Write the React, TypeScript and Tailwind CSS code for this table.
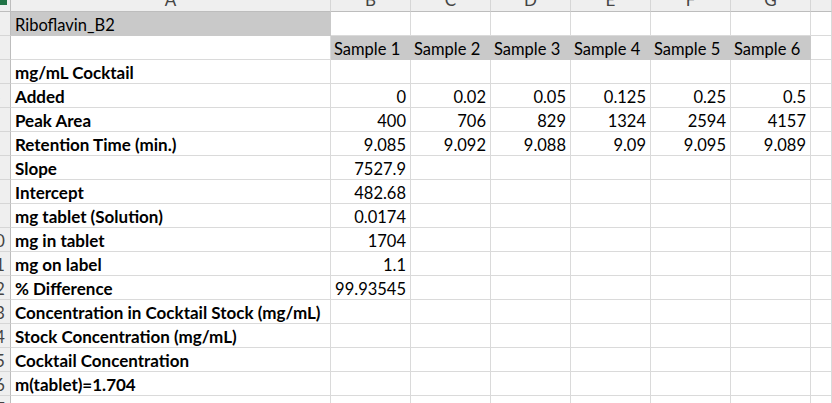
const colLetters = ['A', 'B', 'C', 'D', 'E', 'F', 'G', ''];

type Row = { label?: string; bold?: boolean; values?: string[]; labelFill?: boolean; headerFill?: boolean };

const rows: Row[] = [
  { label: 'Riboflavin_B2', labelFill: true },
  { headerFill: true, values: ['Sample 1', 'Sample 2', 'Sample 3', 'Sample 4', 'Sample 5', 'Sample 6'] },
  { label: 'mg/mL Cocktail', bold: true },
  { label: 'Added', bold: true, values: ['0', '0.02', '0.05', '0.125', '0.25', '0.5'] },
  { label: 'Peak Area', bold: true, values: ['400', '706', '829', '1324', '2594', '4157'] },
  { label: 'Retention Time (min.)', bold: true, values: ['9.085', '9.092', '9.088', '9.09', '9.095', '9.089'] },
  { label: 'Slope', bold: true, values: ['7527.9'] },
  { label: 'Intercept', bold: true, values: ['482.68'] },
  { label: 'mg tablet (Solution)', bold: true, values: ['0.0174'] },
  { label: 'mg in tablet', bold: true, values: ['1704'] },
  { label: 'mg on label', bold: true, values: ['1.1'] },
  { label: '% Difference', bold: true, values: ['99.93545'] },
  { label: 'Concentration in Cocktail Stock (mg/mL)', bold: true },
  { label: 'Stock Concentration (mg/mL)', bold: true },
  { label: 'Cocktail Concentration', bold: true },
  { label: 'm(tablet)=1.704', bold: true },
  {},
];

const cellBase = 'h-[24px] border-r border-b flex items-end overflow-hidden whitespace-nowrap leading-[20px]';

export default function App() {
  return (
    <div className="w-[832px] h-[403px] overflow-hidden bg-white text-black text-[16.5px] [font-family:Lato,'Open_Sans',sans-serif]">
      <div className="grid grid-cols-[11px_320px_repeat(6,80px)_1fr]">
        {/* column header row */}
        <div className="h-[12px] bg-[#efefef] border-r border-b border-r-[#bdbdbd] border-b-[#bdbdbd] overflow-hidden">
          <div className="w-[7px] h-[5px] bg-[#217346]" />
        </div>
        {colLetters.map((l, i) => (
          <div
            key={i}
            className="h-[12px] bg-[#efefef] border-r border-b border-r-[#d6d6d6] border-b-[#bdbdbd] overflow-hidden flex items-end justify-center"
          >
            <span className="leading-none pb-[3px] text-[17px] text-[#444]">{l}</span>
          </div>
        ))}

        {rows.map((r, i) => {
          const n = i + 1;
          return [
            <div key={`h${n}`} className="h-[24px] bg-[#efefef] border-r border-b border-r-[#bdbdbd] border-b-[#d6d6d6] overflow-hidden flex items-end">
              <div className="shrink-0 w-[30px] -ml-[20px] text-center leading-[20px] text-[17px] text-[#444]">{n}</div>
            </div>,
            <div
              key={`a${n}`}
              className={`${cellBase} pl-[4px] ${r.labelFill ? 'bg-[#c9c9c9] border-[#c9c9c9]' : 'border-[#dadada]'} ${r.bold ? 'font-bold text-[17px]' : ''}`}
            >
              {r.label}
            </div>,
            ...[0, 1, 2, 3, 4, 5].map((c) => (
              <div
                key={`v${n}-${c}`}
                className={`${cellBase} ${
                  r.headerFill ? 'bg-[#c9c9c9] border-[#c9c9c9] pl-[3px]' : 'border-[#dadada] justify-end pr-[4px]'
                }`}
              >
                {r.values?.[c]}
              </div>
            )),
            <div key={`x${n}`} className={`${cellBase} border-[#dadada]`} />,
          ];
        })}
      </div>
    </div>
  );
}
